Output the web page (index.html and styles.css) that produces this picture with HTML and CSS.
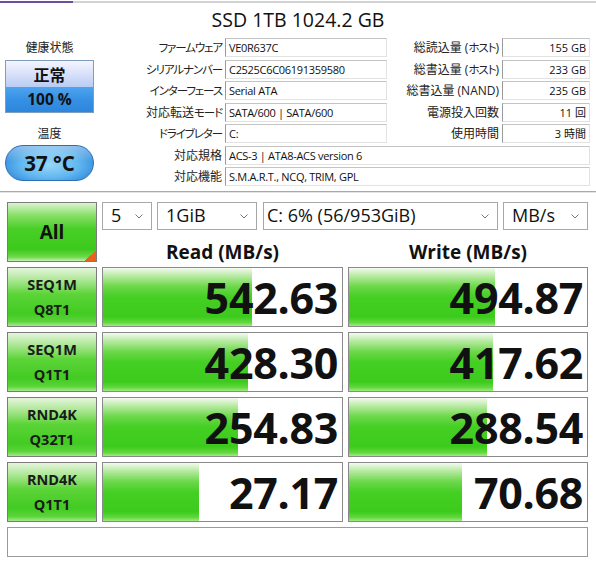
FILE: index.html
```html
<!DOCTYPE html>
<html lang="ja">
<head>
<meta charset="utf-8">
<title>SSD 1TB</title>
<link rel="stylesheet" href="styles.css">
</head>
<body>
<div class="app">
  <div class="topline"></div>
  <div class="title">SSD 1TB 1024.2 GB</div>
  <div class="info">
    <div class="status">
      <div class="cap">健康状態</div>
      <div class="health">
        <div class="h-top">正常</div>
        <div class="h-bot">100 %</div>
      </div>
      <div class="cap cap-temp">温度</div>
      <div class="temp">37 °C</div>
    </div>
    <div class="fields">
      <div class="lbl"><span class="k">ファームウェア</span></div><div class="val">VE0R637C</div>
      <div class="lbl">総読込量 (<span class="k">ホスト</span>)</div><div class="val num">155 GB</div>

      <div class="lbl"><span class="k">シリアルナンバー</span></div><div class="val">C2525C6C06191359580</div>
      <div class="lbl">総書込量 (<span class="k">ホスト</span>)</div><div class="val num">233 GB</div>

      <div class="lbl"><span class="k">インターフェース</span></div><div class="val">Serial ATA</div>
      <div class="lbl">総書込量 (NAND)</div><div class="val num">235 GB</div>

      <div class="lbl">対応転送<span class="k">モード</span></div><div class="val">SATA/600 | SATA/600</div>
      <div class="lbl">電源投入回数</div><div class="val num">11 回</div>

      <div class="lbl"><span class="k">ドライブレター</span></div><div class="val">C:</div>
      <div class="lbl">使用時間</div><div class="val num">3 時間</div>

      <div class="lbl">対応規格</div><div class="val wide">ACS-3 | ATA8-ACS version 6</div>
      <div class="lbl">対応機能</div><div class="val wide">S.M.A.R.T., NCQ, TRIM, GPL</div>
    </div>
  </div>
  <div class="sep"></div>
  <div class="bench">
    <div class="allbtn">All</div>
    <div class="controls">
      <div class="selects">
        <div class="sel s-count"><span>5</span><svg class="chev" viewBox="0 0 8 5" width="8" height="5"><path d="M0.5 0.5 L4 4 L7.5 0.5" fill="none" stroke="#777" stroke-width="1"/></svg></div>
        <div class="sel s-size"><span>1GiB</span><svg class="chev" viewBox="0 0 8 5" width="8" height="5"><path d="M0.5 0.5 L4 4 L7.5 0.5" fill="none" stroke="#777" stroke-width="1"/></svg></div>
        <div class="sel s-drive"><span>C: 6% (56/953GiB)</span><svg class="chev" viewBox="0 0 8 5" width="8" height="5"><path d="M0.5 0.5 L4 4 L7.5 0.5" fill="none" stroke="#777" stroke-width="1"/></svg></div>
        <div class="sel s-unit"><span>MB/s</span><svg class="chev" viewBox="0 0 8 5" width="8" height="5"><path d="M0.5 0.5 L4 4 L7.5 0.5" fill="none" stroke="#777" stroke-width="1"/></svg></div>
      </div>
      <div class="heads">
        <div class="head">Read (MB/s)</div>
        <div class="head">Write (MB/s)</div>
      </div>
    </div>

    <div class="tlabel">SEQ1M<br>Q8T1</div>
    <div class="res"><div class="fill" style="width:149px"></div><div class="n">542.63</div></div>
    <div class="res"><div class="fill" style="width:146px"></div><div class="n">494.87</div></div>

    <div class="tlabel">SEQ1M<br>Q1T1</div>
    <div class="res"><div class="fill" style="width:145px"></div><div class="n">428.30</div></div>
    <div class="res"><div class="fill" style="width:144px"></div><div class="n">417.62</div></div>

    <div class="tlabel">RND4K<br>Q32T1</div>
    <div class="res"><div class="fill" style="width:135px"></div><div class="n">254.83</div></div>
    <div class="res"><div class="fill" style="width:138px"></div><div class="n">288.54</div></div>

    <div class="tlabel">RND4K<br>Q1T1</div>
    <div class="res"><div class="fill" style="width:96px"></div><div class="n">27.17</div></div>
    <div class="res"><div class="fill" style="width:113px"></div><div class="n">70.68</div></div>

    <div class="comment"></div>
  </div>
</div>
</body>
</html>
```

FILE: styles.css
```css
* { box-sizing: border-box; }
html, body { margin: 0; padding: 0; background: #fff; }
body {
  width: 596px;
  height: 566px;
  overflow: hidden;
  font-family: "Open Sans", "Noto Sans CJK JP", sans-serif;
  color: #111;
}
.app { width: 596px; }

.topline {
  margin-top: 1px;
  height: 2px;
  background: linear-gradient(to right, #6d4f9e 0, #6d4f9e 73px, #d2d2d2 73px, #d2d2d2 100%);
}
.title {
  height: 33px;
  font-size: 19.5px;
  line-height: 34px;
  text-align: center;
  color: #111;
}

.info {
  display: flex;
  padding-top: 2px;
}
.status {
  margin-left: 5px;
  width: 89px;
  display: flex;
  flex-direction: column;
}
.cap {
  font-family: "Noto Sans CJK JP", sans-serif;
  font-size: 12px;
  line-height: 18px;
  text-align: center;
  color: #222;
}
.cap-temp { margin-top: 11px; }
.health {
  margin-top: 4px;
  height: 53px;
  border: 1px solid #7f9dbd;
  display: flex;
  flex-direction: column;
}
.h-top {
  height: 26px;
  background: linear-gradient(#f4f5fe, #d6dff9 55%, #b8ccf3);
  font-family: "Noto Sans CJK JP", sans-serif;
  font-weight: 700;
  font-size: 16px;
  line-height: 26px;
  text-align: center;
}
.h-bot {
  flex: 1;
  background: linear-gradient(#4ea4ee, #3690e4 50%, #2c86dc);
  font-weight: 700;
  font-size: 15.5px;
  line-height: 25px;
  text-align: center;
}
.temp {
  margin-top: 3px;
  height: 36px;
  border: 1px solid #2f6fb6;
  border-radius: 18px;
  background:
    linear-gradient(rgba(255,255,255,0.45), rgba(255,255,255,0) 45%),
    radial-gradient(ellipse 60% 70% at 50% 55%, #98d6f8 0%, #62b8f0 55%, #2d86da 100%);
  font-weight: 700;
  font-size: 20.5px;
  line-height: 34px;
  text-align: center;
}

.fields {
  margin-left: 2px;
  display: grid;
  grid-template-columns: 129px 162px 115px 88px;
  grid-auto-rows: 19px;
  row-gap: 2.5px;
}
.lbl {
  font-family: "Open Sans", "Noto Sans CJK JP", sans-serif;
  font-feature-settings: "palt";
  font-size: 12px;
  line-height: 19px;
  text-align: right;
  padding-right: 3px;
  white-space: nowrap;
  color: #222;
}
.lbl .k {
  font-size: 11.5px;
  letter-spacing: -1.1px;
}
.val {
  border: 1px solid #e2e2e2;
  border-left-color: #9a9a9a;
  border-top-color: #c4c4c4;
  font-family: "Open Sans", "Noto Sans CJK JP", sans-serif;
  font-size: 11px;
  letter-spacing: -0.3px;
  line-height: 17px;
  padding-left: 3px;
  white-space: nowrap;
  overflow: hidden;
  color: #111;
}
.val.num {
  text-align: right;
  padding-right: 3px;
  letter-spacing: 0;
}
.val.wide { grid-column: 2 / 5; }

.sep {
  margin-top: 5px;
  height: 0;
  border-top: 1px solid #a9a9a9;
  border-bottom: 1px solid #e4e4e4;
}

.bench {
  margin-top: 9px;
  padding-left: 7px;
  display: grid;
  grid-template-columns: 90px 241px 240px;
  grid-template-rows: 60px 60px 60px 60px 60px 30px;
  column-gap: 5px;
  row-gap: 5px;
}
.allbtn {
  border: 1px solid #7b7b7b;
  background:
    linear-gradient(135deg, transparent 50%, #e8611e 50%) right bottom / 11px 11px no-repeat,
    linear-gradient(#dcf3d0 0%, #86de64 22%, #48cf26 45%, #3cc91c 80%, #6ed84c 93%, #c6efb4 100%);
  font-weight: 700;
  font-size: 19px;
  display: flex;
  align-items: center;
  justify-content: center;
  color: #111;
}
.controls {
  grid-column: 2 / 4;
  display: flex;
  flex-direction: column;
}
.selects {
  display: flex;
  height: 29px;
}
.sel {
  border: 1px solid #a7a7a7;
  background: #fff;
  display: flex;
  align-items: center;
  justify-content: space-between;
  padding: 0 8px 0 8px;
  font-size: 18px;
  line-height: 27px;
  color: #111;
}
.sel span { margin-top: -1px; }
.s-count { width: 50px; }
.s-size { width: 100px; margin-left: 5px; }
.s-drive { width: 235px; margin-left: 6px; padding-left: 3px; }
.s-unit { width: 85px; margin-left: 5px; }
.chev { flex: none; }
.heads {
  flex: 1;
  display: grid;
  grid-template-columns: 241px 240px;
  column-gap: 5px;
}
.head {
  font-weight: 700;
  font-size: 19px;
  text-align: center;
  padding-top: 11px;
  line-height: 22px;
  color: #111;
}

.tlabel {
  border: 1px solid #7b7b7b;
  background: linear-gradient(#e6f5de 0%, #a8e690 22%, #5cd438 45%, #42cb22 78%, #5ad43a 92%, #a6e88c 100%);
  font-weight: 700;
  font-size: 14.5px;
  line-height: 25px;
  text-align: center;
  display: flex;
  align-items: center;
  justify-content: center;
  color: #1a1a1a;
}
.res {
  border: 1px solid #8a8a8a;
  background: #fff;
  display: grid;
  overflow: hidden;
}
.fill {
  grid-area: 1 / 1;
  justify-self: start;
  background: linear-gradient(#f4faf1 0%, #b6eaa0 14%, #6cd84a 32%, #45cf24 50%, #3ccb1c 84%, #62d83e 94%, #a2ea84 100%);
}
.n {
  grid-area: 1 / 1;
  align-self: center;
  justify-self: end;
  padding-right: 4px;
  font-weight: 700;
  font-size: 43px;
  line-height: 1;
  letter-spacing: -0.3px;
  color: #111;
}
.comment {
  grid-column: 1 / 4;
  border: 1px solid #9a9a9a;
  background: #fff;
}
```
